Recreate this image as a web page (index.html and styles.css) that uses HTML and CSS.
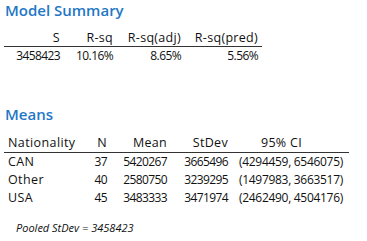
FILE: index.html
```html
<!DOCTYPE html>
<html>
<head>
<meta charset="utf-8">
<link rel="stylesheet" href="styles.css">
</head>
<body>
<h2 class="title">Model Summary</h2>
<table class="tbl summary">
  <thead>
    <tr><th class="c1">S</th><th class="c2">R-sq</th><th class="c3">R-sq(adj)</th><th class="c4">R-sq(pred)</th></tr>
  </thead>
  <tbody>
    <tr><td>3458423</td><td>10.16%</td><td>8.65%</td><td>5.56%</td></tr>
  </tbody>
</table>

<h2 class="title means-title">Means</h2>
<table class="tbl means">
  <thead>
    <tr><th class="m1">Nationality</th><th class="m2">N</th><th class="m3">Mean</th><th class="m4">StDev</th><th class="m5">95% CI</th></tr>
  </thead>
  <tbody>
    <tr><td class="m1">CAN</td><td>37</td><td>5420267</td><td>3665496</td><td class="m5">(4294459, 6546075)</td></tr>
    <tr><td class="m1">Other</td><td>40</td><td>2580750</td><td>3239295</td><td class="m5">(1497983, 3663517)</td></tr>
    <tr><td class="m1">USA</td><td>45</td><td>3483333</td><td>3471974</td><td class="m5">(2462490, 4504176)</td></tr>
  </tbody>
</table>
<p class="note">Pooled StDev = 3458423</p>
</body>
</html>
```

FILE: styles.css
```css
html, body {
  margin: 0;
  padding: 0;
  background: #fff;
}
body {
  font-family: "Open Sans", "Noto Sans", sans-serif;
  font-size: 12.5px;
  color: #111;
  width: 367px;
  height: 241px;
  overflow: hidden;
}
.title {
  margin: 0 0 0 5px;
  font-size: 15px;
  line-height: 20px;
  font-weight: 600;
  color: #1f78c6;
}
.means-title {
  margin-top: 39px;
}
.tbl {
  border-collapse: collapse;
  margin-left: 4px;
  table-layout: fixed;
}
.tbl th {
  font-weight: 400;
  line-height: 16px;
  padding: 0 4px 0 0;
  text-align: right;
  border-bottom: 1px solid #333;
  letter-spacing: 0.3px;
}
.tbl td {
  font-size: 12px;
  letter-spacing: -0.6px;
  line-height: 18px;
  padding: 0 4px 0 0;
  text-align: right;
  white-space: nowrap;
}
.summary {
  margin-top: 10px;
}
.summary .c1 { width: 56px; }
.summary .c2 { width: 49px; }
.summary .c3 { width: 64px; }
.summary .c4 { width: 73px; }

.means {
  margin-top: 11px;
}
.means th {
  padding-bottom: 1px;
}
.means .m1 { width: 72px; text-align: left; padding-left: 4px; padding-right: 0; }
.means th.m1 { letter-spacing: 0.4px; }
.means td.m1 { font-size: 12.5px; letter-spacing: 0.4px; }
.means .m2 { width: 27px; }
.means .m3 { width: 56px; }
.means .m4 { width: 57px; }
.means th.m5 { width: 99px; text-align: center; padding-right: 18px; }
.means td.m5 { text-align: left; padding-left: 7px; letter-spacing: -0.3px; }

.note {
  margin: 13px 0 0 16px;
  font-size: 11px;
  line-height: 16px;
  font-style: italic;
}
```
